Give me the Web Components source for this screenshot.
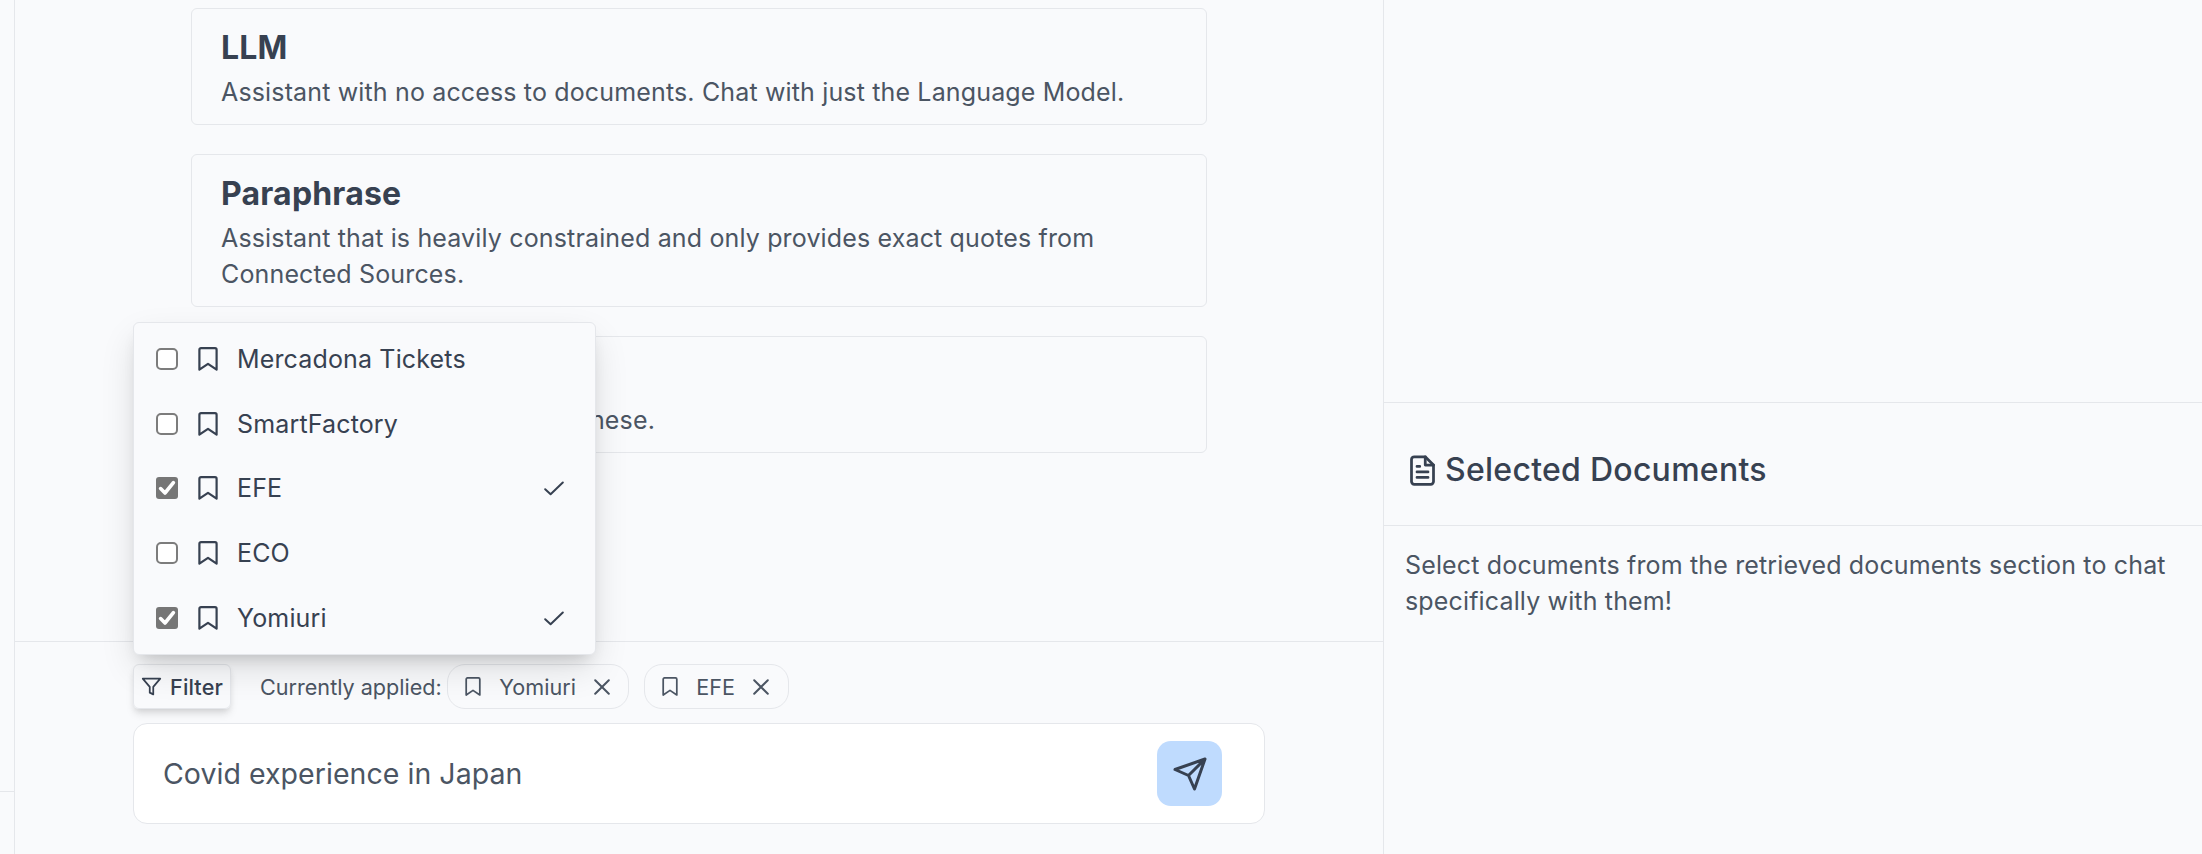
<!DOCTYPE html>
<html lang="en">
<head>
<meta charset="utf-8">
<title>Assistant chat</title>
<style>
  :root {
    --bg: #f9fafc;
    --line: #e5e7eb;
    --ink: #374151;
    --muted: #4b5563;
    --accent: #bfdbfe;
  }

  body {
    margin: 0;
    height: 854px;
    overflow: hidden;
    background: var(--bg);
    color: var(--muted);
    font: 400 25px/36px Inter, 'Liberation Sans', sans-serif;
    letter-spacing: 0.15px;
  }
</style>
</head>
<body>
<chat-app>
  <assistant-card slot="assistants" heading="LLM">Assistant with no access to documents. Chat with just the Language Model.</assistant-card>
  <assistant-card slot="assistants" heading="Paraphrase">Assistant that is heavily constrained and only provides exact quotes from Connected Sources.</assistant-card>
  <assistant-card slot="assistants" trailing>Japanese.</assistant-card>

  <filter-bar slot="composer">
    <filter-option slot="options">Mercadona Tickets</filter-option>
    <filter-option slot="options">SmartFactory</filter-option>
    <filter-option slot="options" checked>EFE</filter-option>
    <filter-option slot="options">ECO</filter-option>
    <filter-option slot="options" checked>Yomiuri</filter-option>
    <filter-chip>Yomiuri</filter-chip>
    <filter-chip>EFE</filter-chip>
  </filter-bar>
  <message-box slot="composer">Covid experience in Japan</message-box>

  <documents-panel slot="documents">
    <span slot="title">Selected Documents</span>
    Select documents from the retrieved documents section to chat specifically with them!
  </documents-panel>
</chat-app>

<script>
const ICONS = {
  bookmark: ['0 0 20 24', '<path d="M3 1.1h14a1.6 1.6 0 0 1 1.6 1.6V22.7L10 16.9 1.4 22.7V2.7A1.6 1.6 0 0 1 3 1.1z"/>'],
  check: ['0 0 20 15', '<path d="M1.2 8.2 6.6 13.2 18.8 1.5"/>'],
  tick: ['0 0 22 22', '<path d="M4.6 11.6 9 16 17.4 5.6"/>'],
  close: ['0 0 16 16', '<path d="M1.2 1.2 14.8 14.8M14.8 1.2 1.2 14.8"/>'],
  filter: ['0 0 24 24', '<path d="M22 3H2l8 9.46V19l4 2v-8.54z"/>'],
  send: ['0 0 24 24', '<path d="M22 2 11 13M22 2l-7 20-4-9-9-4z"/>'],
  file: ['0 0 24 24', '<path d="M14 2H6a2 2 0 0 0-2 2v16a2 2 0 0 0 2 2h12a2 2 0 0 0 2-2V8z"/><path d="M14 2v6h6M16 13H8M16 17H8M10 9H8"/>'],
};

class UiIcon extends HTMLElement {
  connectedCallback() {
    if (this.shadowRoot) return;
    const [box, shape] = ICONS[this.getAttribute('name')];
    this.attachShadow({ mode: 'open' }).innerHTML = `
      <style>
        :host { display: block; flex: none; }
        svg {
          display: block;
          width: 100%;
          height: 100%;
          fill: none;
          stroke: currentColor;
          stroke-width: var(--stroke, 2);
          stroke-linecap: round;
          stroke-linejoin: round;
        }
      </style>
      <svg viewBox="${box}" aria-hidden="true">${shape}</svg>
    `;
  }
}

class ChatApp extends HTMLElement {
  connectedCallback() {
    if (this.shadowRoot) return;
    this.attachShadow({ mode: 'open' }).innerHTML = `
      <style>
        :host { display: flex; height: 854px; }
        * { box-sizing: border-box; }
        nav { width: 15px; border-right: 1px solid var(--line); display: flex; flex-direction: column; }
        nav div { height: 792px; border-bottom: 1px solid var(--line); }
        main { flex: 1; display: flex; flex-direction: column; min-width: 0; }
        .list {
          flex: 1;
          display: flex;
          flex-direction: column;
          gap: 29px;
          padding: 8px 176px 0;
        }
        footer {
          height: 213px;
          border-top: 1px solid var(--line);
          padding: 22px 118px 0;
          display: flex;
          flex-direction: column;
          gap: 14px;
        }
        aside { width: 819px; border-left: 1px solid var(--line); display: flex; flex-direction: column; }
        .retrieved { height: 403px; border-bottom: 1px solid var(--line); }
      </style>
      <nav><div></div></nav>
      <main>
        <div class="list"><slot name="assistants"></slot></div>
        <footer><slot name="composer"></slot></footer>
      </main>
      <aside>
        <div class="retrieved"></div>
        <slot name="documents"></slot>
      </aside>
    `;
  }
}

class AssistantCard extends HTMLElement {
  connectedCallback() {
    if (this.shadowRoot) return;
    this.attachShadow({ mode: 'open' }).innerHTML = `
      <style>
        :host {
          display: block;
          padding: 15px 29px 14px;
          border: 1px solid var(--line);
          border-radius: 6px;
        }
        h2 {
          margin: 0 0 2px;
          height: 48px;
          font-size: 32px;
          line-height: 48px;
          font-weight: 700;
          letter-spacing: 0.2px;
          color: var(--ink);
        }
        p { margin: 0; }
        :host([trailing]) p { width: 434px; text-align: right; }
      </style>
      <h2>${this.getAttribute('heading') || ''}</h2>
      <p><slot></slot></p>
    `;
  }
}

class FilterBar extends HTMLElement {
  connectedCallback() {
    if (this.shadowRoot) return;
    this.attachShadow({ mode: 'open' }).innerHTML = `
      <style>
        :host {
          display: flex;
          align-items: center;
          height: 45px;
          font-size: 21.6px;
          letter-spacing: 0;
        }
        .anchor { position: relative; margin-right: 29px; }
        button {
          box-sizing: border-box;
          display: flex;
          align-items: center;
          gap: 8px;
          width: 98px;
          height: 45px;
          padding: 0 7px;
          border: 1px solid var(--line);
          border-radius: 6px;
          background: transparent;
          color: var(--ink);
          font: inherit;
          font-weight: 500;
          letter-spacing: 0.15px;
          box-shadow: 0 6px 9px -1px rgba(0, 0, 0, 0.1), 0 3px 6px -2px rgba(0, 0, 0, 0.1);
        }
        button ui-icon { width: 21px; height: 21px; }
        .menu {
          position: absolute;
          left: 0;
          bottom: calc(100% + 9px);
          box-sizing: border-box;
          width: 463px;
          height: 333px;
          padding: 3.5px 0;
          background: var(--bg);
          border: 1px solid var(--line);
          border-radius: 6px;
          box-shadow: 0 15px 37px -4px rgba(0, 0, 0, 0.14), 0 9px 15px -7px rgba(0, 0, 0, 0.16);
          font-size: 25px;
          letter-spacing: 0.15px;
        }
        .chips { display: flex; gap: 15px; margin-left: 5.5px; }
      </style>
      <div class="anchor">
        <button><ui-icon name="filter"></ui-icon>Filter</button>
        <div class="menu"><slot name="options"></slot></div>
      </div>
      <span>Currently applied:</span>
      <div class="chips"><slot></slot></div>
    `;
  }
}

class FilterOption extends HTMLElement {
  connectedCallback() {
    if (this.shadowRoot) return;
    const checked = this.hasAttribute('checked');
    this.attachShadow({ mode: 'open' }).innerHTML = `
      <style>
        :host {
          display: flex;
          align-items: center;
          height: 64.8px;
          padding: 0 31px 0 22px;
          color: var(--ink);
        }
        .box {
          box-sizing: border-box;
          width: 22px;
          height: 22px;
          border: 2px solid #7c7c7c;
          border-radius: 5px;
          background: #fff;
        }
        :host([checked]) .box { border: 0; border-radius: 3px; background: #767676; color: #fff; --stroke: 3.6; }
        .mark { width: 20px; height: 24px; margin: 0 19px 0 20px; --stroke: 2.2; }
        .tick { width: 20px; height: 15px; }
        .label { flex: 1; }
      </style>
      <div class="box">${checked ? '<ui-icon name="tick"></ui-icon>' : ''}</div>
      <ui-icon class="mark" name="bookmark"></ui-icon>
      <div class="label"><slot></slot></div>
      ${checked ? '<ui-icon class="tick" name="check"></ui-icon>' : ''}
    `;
  }
}

class FilterChip extends HTMLElement {
  connectedCallback() {
    if (this.shadowRoot) return;
    this.attachShadow({ mode: 'open' }).innerHTML = `
      <style>
        :host {
          box-sizing: border-box;
          display: flex;
          align-items: center;
          height: 45px;
          padding: 0 18.5px 0 17px;
          border: 1px solid var(--line);
          border-radius: 18px;
        }
        .mark { width: 16px; height: 19px; margin-right: 18px; --stroke: 2.2; }
        .close { width: 16px; height: 16px; margin-left: 18px; }
      </style>
      <ui-icon class="mark" name="bookmark"></ui-icon>
      <slot></slot>
      <ui-icon class="close" name="close"></ui-icon>
    `;
  }
}

class MessageBox extends HTMLElement {
  connectedCallback() {
    if (this.shadowRoot) return;
    this.attachShadow({ mode: 'open' }).innerHTML = `
      <style>
        :host {
          box-sizing: border-box;
          display: flex;
          align-items: center;
          justify-content: space-between;
          height: 101px;
          padding: 0 42px 0 29px;
          border: 1px solid var(--line);
          border-radius: 14px;
          background: #fff;
          font-size: 28.5px;
          letter-spacing: 0.04px;
        }
        button {
          display: flex;
          align-items: center;
          justify-content: center;
          width: 65px;
          height: 65px;
          padding: 0;
          border: 0;
          border-radius: 14px;
          background: var(--accent);
          color: var(--ink);
        }
        ui-icon { width: 36px; height: 36px; }
      </style>
      <span><slot></slot></span>
      <button aria-label="Send"><ui-icon name="send"></ui-icon></button>
    `;
  }
}

class DocumentsPanel extends HTMLElement {
  connectedCallback() {
    if (this.shadowRoot) return;
    this.attachShadow({ mode: 'open' }).innerHTML = `
      <style>
        :host { display: block; }
        header {
          display: flex;
          align-items: center;
          gap: 6px;
          padding: 43px 22px 31px;
          border-bottom: 1px solid var(--line);
          font-size: 32px;
          line-height: 48px;
          font-weight: 500;
          letter-spacing: 0.27px;
          color: var(--ink);
        }
        header ui-icon { width: 33px; height: 33px; }
        p { margin: 0; padding: 21px 20px 21px 21px; }
      </style>
      <header><ui-icon name="file"></ui-icon><slot name="title"></slot></header>
      <p><slot></slot></p>
    `;
  }
}

customElements.define('ui-icon', UiIcon);
customElements.define('assistant-card', AssistantCard);
customElements.define('filter-option', FilterOption);
customElements.define('filter-chip', FilterChip);
customElements.define('filter-bar', FilterBar);
customElements.define('message-box', MessageBox);
customElements.define('documents-panel', DocumentsPanel);
customElements.define('chat-app', ChatApp);
</script>
</body>
</html>
